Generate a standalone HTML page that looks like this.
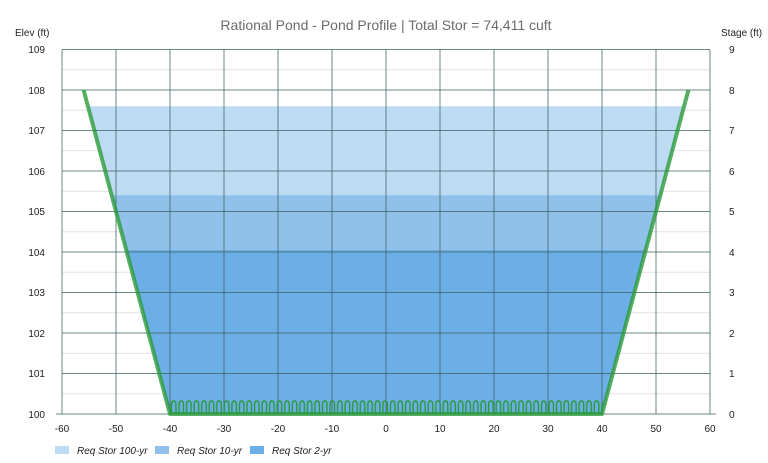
<!DOCTYPE html>
<html><head><meta charset="utf-8"><style>
html,body{margin:0;padding:0;background:#fff;}
svg{display:block;font-family:"Liberation Sans",Arial,sans-serif;}
</style></head><body>
<svg width="768" height="463" viewBox="0 0 768 463" xmlns="http://www.w3.org/2000/svg">
<defs>
<pattern id="lp" patternUnits="userSpaceOnUse" x="170" y="399" width="7.55" height="16">
<path d="M1.5,15 L1.5,6 Q1.5,2 3.8,2 Q6,2 6,6 L6,15" fill="none" stroke="#2a9a3a" stroke-width="1.4"/>
</pattern>
</defs>
<text x="386" y="30" font-size="14" fill="#6b6b6b" text-anchor="middle">Rational Pond - Pond Profile | Total Stor = 74,411 cuft</text>
<text x="15" y="36" font-size="10" fill="#222">Elev (ft)</text>
<text x="721" y="36" font-size="10" fill="#222">Stage (ft)</text>
<!-- minor grid -->
<g stroke="#e2e2e2" stroke-width="1">
<line x1="62" x2="710" y1="69.8" y2="69.8"/><line x1="62" x2="710" y1="110.3" y2="110.3"/>
<line x1="62" x2="710" y1="150.8" y2="150.8"/><line x1="62" x2="710" y1="191.3" y2="191.3"/>
<line x1="62" x2="710" y1="231.8" y2="231.8"/><line x1="62" x2="710" y1="272.3" y2="272.3"/>
<line x1="62" x2="710" y1="312.8" y2="312.8"/><line x1="62" x2="710" y1="353.3" y2="353.3"/>
<line x1="62" x2="710" y1="393.8" y2="393.8"/>
</g>
<!-- fills -->
<polygon points="88.1,106.2 683.9,106.2 602,414 170,414" fill="#bddbf3"/>
<polygon points="111.7,195.3 660.3,195.3 602,414 170,414" fill="#8fc1ea"/>
<polygon points="126.3,250 645.7,250 602,414 170,414" fill="#6cafe6"/>
<!-- major grid -->
<g stroke="#3d5f5f" stroke-opacity="0.75" stroke-width="1">
<line x1="62" x2="710" y1="49.5" y2="49.5"/><line x1="62" x2="710" y1="90" y2="90"/>
<line x1="62" x2="710" y1="130.5" y2="130.5"/><line x1="62" x2="710" y1="171" y2="171"/>
<line x1="62" x2="710" y1="211.5" y2="211.5"/><line x1="62" x2="710" y1="252" y2="252"/>
<line x1="62" x2="710" y1="292.5" y2="292.5"/><line x1="62" x2="710" y1="333" y2="333"/>
<line x1="62" x2="710" y1="373.5" y2="373.5"/><line x1="56" x2="716" y1="414" y2="414"/>
<line x1="62" x2="62" y1="49.5" y2="414"/><line x1="116" x2="116" y1="49.5" y2="414"/>
<line x1="170" x2="170" y1="49.5" y2="414"/><line x1="224" x2="224" y1="49.5" y2="414"/>
<line x1="278" x2="278" y1="49.5" y2="414"/><line x1="332" x2="332" y1="49.5" y2="414"/>
<line x1="386" x2="386" y1="49.5" y2="414"/><line x1="440" x2="440" y1="49.5" y2="414"/>
<line x1="494" x2="494" y1="49.5" y2="414"/><line x1="548" x2="548" y1="49.5" y2="414"/>
<line x1="602" x2="602" y1="49.5" y2="414"/><line x1="656" x2="656" y1="49.5" y2="414"/>
<line x1="710" x2="710" y1="49.5" y2="414"/>
</g>
<!-- pond profile -->
<rect x="170" y="399" width="432" height="15" fill="url(#lp)"/>
<polyline points="83.6,90 170,414 602,414 688.4,90" fill="none" stroke="#2a9a3a" stroke-opacity="0.8" stroke-width="4" stroke-linejoin="round"/>
<!-- left labels -->
<g font-size="10" fill="#222" text-anchor="end">
<text x="45" y="53">109</text><text x="45" y="94">108</text><text x="45" y="134">107</text>
<text x="45" y="175">106</text><text x="45" y="215">105</text><text x="45" y="256">104</text>
<text x="45" y="296">103</text><text x="45" y="337">102</text><text x="45" y="377">101</text>
<text x="45" y="418">100</text>
</g>
<g font-size="10" fill="#222">
<text x="729" y="53">9</text><text x="729" y="94">8</text><text x="729" y="134">7</text>
<text x="729" y="175">6</text><text x="729" y="215">5</text><text x="729" y="256">4</text>
<text x="729" y="296">3</text><text x="729" y="337">2</text><text x="729" y="377">1</text>
<text x="729" y="418">0</text>
</g>
<g font-size="10" fill="#222" text-anchor="middle">
<text x="62" y="432">-60</text><text x="116" y="432">-50</text><text x="170" y="432">-40</text>
<text x="224" y="432">-30</text><text x="278" y="432">-20</text><text x="332" y="432">-10</text>
<text x="386" y="432">0</text><text x="440" y="432">10</text><text x="494" y="432">20</text>
<text x="548" y="432">30</text><text x="602" y="432">40</text><text x="656" y="432">50</text>
<text x="710" y="432">60</text>
</g>
<!-- legend -->
<rect x="55" y="446" width="14" height="8" fill="#bddbf3"/>
<text x="77" y="454" font-size="10" font-style="italic" fill="#222">Req Stor 100-yr</text>
<rect x="155" y="446" width="14" height="8" fill="#8fc1ea"/>
<text x="177" y="454" font-size="10" font-style="italic" fill="#222">Req Stor 10-yr</text>
<rect x="250" y="446" width="14" height="8" fill="#6cafe6"/>
<text x="272" y="454" font-size="10" font-style="italic" fill="#222">Req Stor 2-yr</text>
</svg>
</body></html>
